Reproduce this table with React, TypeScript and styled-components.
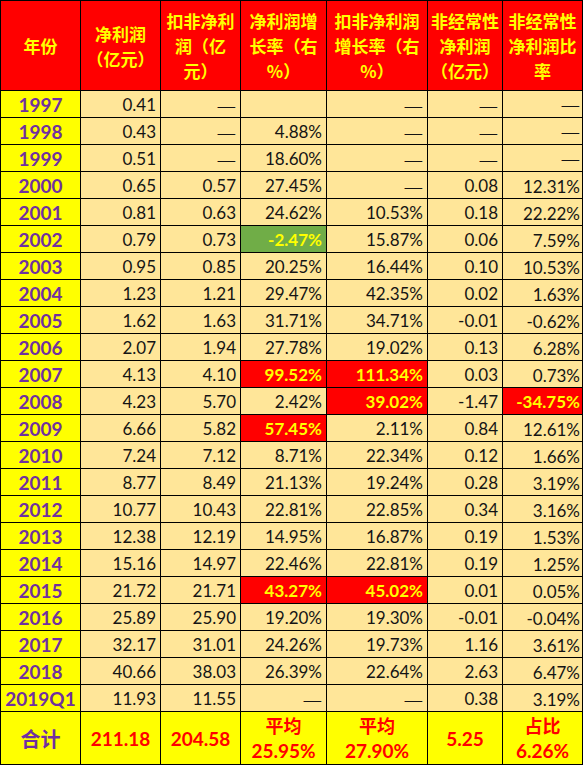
import styled, { createGlobalStyle } from "styled-components";

type Tone = "plain" | "red" | "green";
type Val = string | [string, Tone];

const GlobalStyle = createGlobalStyle`
    body {
        margin: 0;
        background: #ffffff;
    }
`;

// 列宽与原表格一致，黑色背景 + 1px 间隙画出网格线
const Table = styled.div`
    display: grid;
    grid-template-columns: 79px 79px 79px 85px 100px 74px 79px;
    grid-template-rows: 89px repeat(23, 26px) 52px;
    gap: 1px;
    padding: 1px;
    width: 583px;
    box-sizing: border-box;
    background: #000;
`;

const HeadCell = styled.div`
    background: #ff0000;
    color: #ffff00;
    font-family: "Noto Sans CJK SC", sans-serif;
    font-weight: 700;
    font-size: 17px;
    line-height: 25px;
    text-spacing-trim: space-all;
    display: flex;
    align-items: center;
    justify-content: center;
    text-align: center;
    white-space: nowrap;
`;

const YearCell = styled.div`
    background: #ffff00;
    color: #7030a0;
    font-family: Lato, "Noto Sans CJK SC", sans-serif;
    font-weight: 700;
    font-size: 19px;
    display: flex;
    align-items: center;
    justify-content: center;
`;

const bgOf = (t: Tone) =>
    t === "red" ? "#ff0000" : t === "green" ? "#70ad47" : "#ffe699";

const NumCell = styled.div<{ $tone: Tone; $low?: boolean }>`
    background: ${(p) => bgOf(p.$tone)};
    color: ${(p) => (p.$tone === "plain" ? "#141414" : "#ffff00")};
    font-family: Lato, sans-serif;
    font-weight: ${(p) => (p.$tone === "plain" ? 400 : 700)};
    font-size: 17px;
    display: flex;
    align-items: ${(p) => (p.$low && p.$tone === "plain" ? "flex-end" : "center")};
    justify-content: flex-end;
    padding-bottom: ${(p) => (p.$low && p.$tone === "plain" ? "1px" : "0")};
    padding-right: ${(p) => (p.$low ? "2px" : "4px")};
`;

const Dash = styled.span`
    font-family: "Noto Sans CJK SC", sans-serif;
    font-size: 17px;
    transform: scaleX(1.3);
    transform-origin: right center;
`;

const TotalCell = styled.div`
    background: #ffff00;
    color: #ff0000;
    font-family: Lato, "Noto Sans CJK SC", sans-serif;
    font-weight: 700;
    font-size: 19px;
    line-height: 25px;
    display: flex;
    flex-direction: column;
    align-items: center;
    justify-content: center;
    text-align: center;
`;

const TotalLabel = styled.span<{ $size?: number }>`
    font-family: "Noto Sans CJK SC", sans-serif;
    font-size: ${(p) => p.$size ?? 18}px;
`;

const heads = [
    ["年份"],
    ["净利润", "（亿元）"],
    ["扣非净利", "润（亿", "元）"],
    ["净利润增", "长率（右", "%）"],
    ["扣非净利润", "增长率（右", "%）"],
    ["非经常性", "净利润", "（亿元）"],
    ["非经常性", "净利润比", "率"],
];

const rows: Val[][] = [
    ["1997", "0.41", "—", "", "—", "—", "—"],
    ["1998", "0.43", "—", "4.88%", "—", "—", "—"],
    ["1999", "0.51", "—", "18.60%", "—", "—", "—"],
    ["2000", "0.65", "0.57", "27.45%", "—", "0.08", "12.31%"],
    ["2001", "0.81", "0.63", "24.62%", "10.53%", "0.18", "22.22%"],
    ["2002", "0.79", "0.73", ["-2.47%", "green"], "15.87%", "0.06", "7.59%"],
    ["2003", "0.95", "0.85", "20.25%", "16.44%", "0.10", "10.53%"],
    ["2004", "1.23", "1.21", "29.47%", "42.35%", "0.02", "1.63%"],
    ["2005", "1.62", "1.63", "31.71%", "34.71%", "-0.01", "-0.62%"],
    ["2006", "2.07", "1.94", "27.78%", "19.02%", "0.13", "6.28%"],
    ["2007", "4.13", "4.10", ["99.52%", "red"], ["111.34%", "red"], "0.03", "0.73%"],
    ["2008", "4.23", "5.70", "2.42%", ["39.02%", "red"], "-1.47", ["-34.75%", "red"]],
    ["2009", "6.66", "5.82", ["57.45%", "red"], "2.11%", "0.84", "12.61%"],
    ["2010", "7.24", "7.12", "8.71%", "22.34%", "0.12", "1.66%"],
    ["2011", "8.77", "8.49", "21.13%", "19.24%", "0.28", "3.19%"],
    ["2012", "10.77", "10.43", "22.81%", "22.85%", "0.34", "3.16%"],
    ["2013", "12.38", "12.19", "14.95%", "16.87%", "0.19", "1.53%"],
    ["2014", "15.16", "14.97", "22.46%", "22.81%", "0.19", "1.25%"],
    ["2015", "21.72", "21.71", ["43.27%", "red"], ["45.02%", "red"], "0.01", "0.05%"],
    ["2016", "25.89", "25.90", "19.20%", "19.30%", "-0.01", "-0.04%"],
    ["2017", "32.17", "31.01", "24.26%", "19.73%", "1.16", "3.61%"],
    ["2018", "40.66", "38.03", "26.39%", "22.64%", "2.63", "6.47%"],
    ["2019Q1", "11.93", "11.55", "—", "—", "0.38", "3.19%"],
];

const totals: [string, string?][] = [
    ["211.18"],
    ["204.58"],
    ["平均", "25.95%"],
    ["平均", "27.90%"],
    ["5.25"],
    ["占比", "6.26%"],
];

const App = () => {
    return (
        <>
            <GlobalStyle />
            <Table>
                {heads.map((lines, i) => (
                    <HeadCell key={"h" + i}>
                        <div>
                            {lines.map((l) => (
                                <div key={l}>{l}</div>
                            ))}
                        </div>
                    </HeadCell>
                ))}
                {rows.map((row) => {
                    const [year, ...vals] = row;
                    return [
                        <YearCell key={year as string}>{year as string}</YearCell>,
                        ...vals.map((v, j) => {
                            const [text, tone] = typeof v === "string" ? [v, "plain" as Tone] : v;
                            return (
                                <NumCell key={`${year}-${j}`} $tone={tone} $low={j === 5}>
                                    {text === "—" ? <Dash>—</Dash> : text}
                                </NumCell>
                            );
                        }),
                    ];
                })}
                <YearCell>
                    <TotalLabel $size={20}>合计</TotalLabel>
                </YearCell>
                {totals.map(([a, b], i) => (
                    <TotalCell key={"t" + i}>
                        {b ? (
                            <>
                                <TotalLabel>{a}</TotalLabel>
                                <span>{b}</span>
                            </>
                        ) : (
                            <span>{a}</span>
                        )}
                    </TotalCell>
                ))}
            </Table>
        </>
    );
};

export default App;
